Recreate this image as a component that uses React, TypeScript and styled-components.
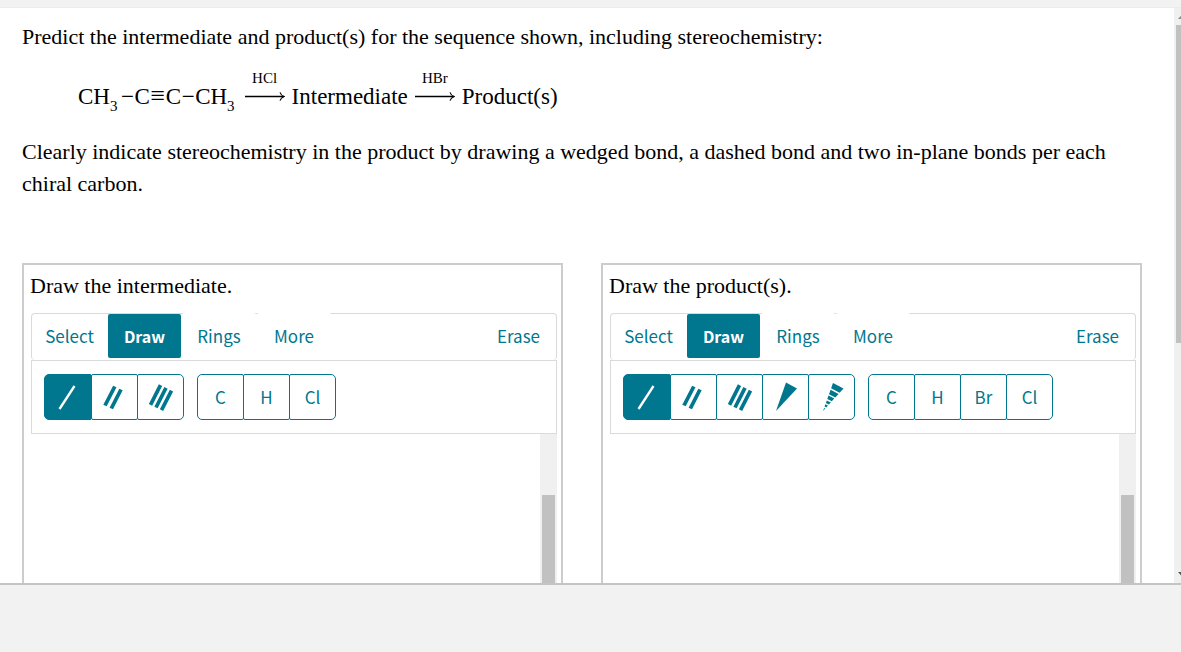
import React from "react";
import styled, { createGlobalStyle } from "styled-components";

const TEAL = "#00778f";
const LINE = "#dadada";

const GlobalStyle = createGlobalStyle`
  *, *::before, *::after { box-sizing: border-box; }
  body {
    margin: 0;
    background: #f2f2f2;
    color: #000;
    font-family: "Liberation Serif", "Times New Roman", serif;
    font-size: 22px;
    line-height: 32px;
  }
`;

const Page = styled.div`
  display: flex;
  flex-direction: column;
  height: 100vh;
  padding: 7px 0 67px;
`;

const Frame = styled.div`
  display: flex;
  flex: 1;
  min-height: 0;
  border-top: 1px solid #ebebeb;
  border-bottom: 2px solid #c4c4c4;
`;

const Question = styled.main`
  flex: 1;
  min-width: 0;
  overflow: hidden;
  background: #fff;
  padding: 13px 32px 0 22px;
`;

const Prompt = styled.p`
  margin: 0;
`;

const Reaction = styled.div`
  display: flex;
  align-items: flex-end;
  margin: 16px 0 23px;
  padding-left: 56px;
  height: 44px;
  font-size: 23px;
`;

const Sub = styled.sub`
  font-size: 15px;
  line-height: 0;
  vertical-align: -7px;
  margin-right: 3px;
`;

const Link = styled.span<{ $triple?: boolean }>`
  display: inline-block;
  width: ${(p) => (p.$triple ? 16 : 14)}px;
  font-size: ${(p) => (p.$triple ? 26 : 23)}px;
  line-height: 24px;
  text-align: center;
`;

const Step = styled.span`
  display: flex;
  flex-direction: column;
  align-items: center;
  gap: 4px;
  width: 40px;
  margin: 0 7px;
  padding-bottom: 11px;
  font-size: 15px;
  line-height: 16px;
`;

const Panels = styled.div`
  display: grid;
  grid-template-columns: 1fr 1fr;
  gap: 38px;
  margin-top: 63px;
`;

const Panel = styled.section`
  border: 2px solid #ccc;
  padding: 5px 4px 8px 7px;
`;

const PanelTitle = styled.h2`
  margin: 0 0 11px -1px;
  font-size: 22px;
  font-weight: 400;
  line-height: 32px;
`;

const Tabs = styled.div`
  display: flex;
  gap: 1px;
  height: 47px;
  border: 1px solid ${LINE};
  border-bottom: 0;
  border-radius: 4px;
`;

const Tab = styled.button<{ $active?: boolean; $cover?: boolean; $wide?: boolean; $end?: boolean }>`
  width: ${(p) => (p.$wide ? 75 : p.$active ? 73 : 74)}px;
  height: ${(p) => (p.$cover ? 45 : 44)}px;
  margin-top: ${(p) => (p.$cover ? -1 : 0)}px;
  margin-left: ${(p) => (p.$end ? "auto" : 0)};
  padding: ${(p) => (p.$cover ? 1 : 0)}px 0 0;
  border: 0;
  border-radius: 2px;
  background: ${(p) => (p.$active ? TEAL : p.$cover ? "#fff" : "transparent")};
  color: ${(p) => (p.$active ? "#fff" : TEAL)};
  font-family: "Noto Sans CJK SC", sans-serif;
  font-size: ${(p) => (p.$active ? 16 : 17)}px;
  font-weight: ${(p) => (p.$active ? 700 : 400)};
  line-height: 24px;
  cursor: pointer;
`;

const Tools = styled.div`
  display: flex;
  gap: 13px;
  padding: 13px 12px;
  border: 1px solid ${LINE};
`;

const Group = styled.div`
  display: flex;
`;

const Tool = styled.button<{ $active?: boolean }>`
  display: flex;
  align-items: center;
  justify-content: center;
  width: ${(p) => (p.$active ? 48 : 47)}px;
  height: 46px;
  padding: 0;
  border: 1px solid ${TEAL};
  border-radius: 2px;
  background: ${(p) => (p.$active ? TEAL : "#fff")};
  color: ${(p) => (p.$active ? "#fff" : TEAL)};
  font-family: "Noto Sans CJK SC", sans-serif;
  font-size: 17px;
  line-height: 24px;
  cursor: pointer;

  & + & { margin-left: -1px; }
  &:first-child { border-top-left-radius: 5px; border-bottom-left-radius: 5px; }
  &:last-child { border-top-right-radius: 5px; border-bottom-right-radius: 5px; }
`;

const Canvas = styled.div`
  display: flex;
  justify-content: flex-end;
  height: 320px;
`;

const CanvasTrack = styled.div`
  width: 17px;
  padding: 61px 2px 0;
  background: #f0f0f0;
`;

const CanvasThumb = styled.div`
  height: 180px;
  background: #c1c1c1;
`;

const PageTrack = styled.div`
  display: flex;
  flex-direction: column;
  align-items: flex-start;
  width: 7px;
  overflow: hidden;
  background: #f0f0f0;
`;

const PageThumb = styled.div`
  width: 13px;
  height: 318px;
  margin: 0 2px auto;
  background: #c1c1c1;
`;

const Arrow = () => (
  <svg width="40" height="12" viewBox="0 0 40 12" fill="none" stroke="#000" aria-hidden="true">
    <path d="M0 6.5H38.5" strokeWidth="1.4" />
    <path d="M35 2.3C35.7 4.5 37 5.8 39.3 6.5C37 7.2 35.7 8.5 35 10.7" strokeWidth="1.1" />
  </svg>
);

type Bond = "single" | "double" | "triple" | "wedge" | "hash";

const bondNames: Record<Bond, string> = {
  single: "Single bond",
  double: "Double bond",
  triple: "Triple bond",
  wedge: "Wedged bond",
  hash: "Dashed bond",
};

const BondIcon = ({ kind }: { kind: Bond }) => (
  <svg width="30" height="30" viewBox="0 0 30 30" fill="none" stroke="currentColor" aria-hidden="true">
    {kind === "single" && <path d="M6.5 27L21.5 4" strokeWidth="2.3" />}
    {kind === "double" && <path d="M5 23.5L14.8 4.5M11.3 26.5L21 7.5" strokeWidth="3.8" />}
    {kind === "triple" && <path d="M4.5 22.8L14.5 3.2M10 25.5L20 5.9M15.5 28.2L25.5 8.6" strokeWidth="3.7" />}
    {kind === "wedge" && <path d="M5 29L15 0.5L26 6.5Z" fill="currentColor" stroke="none" />}
    {kind === "hash" && (
      <g fill="currentColor" stroke="none">
        <path d="M16 1L26.5 6.5L22.6 10.8L14.1 6.3Z" />
        <path d="M13.6 7.7L21.6 11.9L18.3 15.5L12 12.2Z" />
        <path d="M11.5 13.6L17.3 16.6L14.8 19.3L10.3 17Z" />
        <path d="M9.8 18.4L13.8 20.5L11.9 22.5L8.9 20.9Z" />
        <path d="M8.4 22.3L10.9 23.6L9.3 25.4L7.6 24.5Z" />
        <path d="M7.1 25.9L8.3 26.5L6 29Z" />
      </g>
    )}
  </svg>
);

const Editor = ({ title, bonds, atoms }: { title: string; bonds: Bond[]; atoms: string[] }) => (
  <Panel>
    <PanelTitle>{title}</PanelTitle>
    <Tabs>
      <Tab type="button" $wide>Select</Tab>
      <Tab type="button" $active>Draw</Tab>
      <Tab type="button" $cover>Rings</Tab>
      <Tab type="button" $cover>More</Tab>
      <Tab type="button" $wide $end>Erase</Tab>
    </Tabs>
    <Tools>
      <Group>
        {bonds.map((b) => (
          <Tool key={b} type="button" $active={b === "single"} aria-label={bondNames[b]}>
            <BondIcon kind={b} />
          </Tool>
        ))}
      </Group>
      <Group>
        {atoms.map((a) => (
          <Tool key={a} type="button">{a}</Tool>
        ))}
      </Group>
    </Tools>
    <Canvas>
      <CanvasTrack>
        <CanvasThumb />
      </CanvasTrack>
    </Canvas>
  </Panel>
);

export default function App() {
  return (
    <Page>
      <GlobalStyle />
      <Frame>
        <Question>
          <Prompt>
            Predict the intermediate and product(s) for the sequence shown, including stereochemistry:
          </Prompt>
          <Reaction>
            <span>
              CH<Sub>3</Sub><Link>−</Link>C<Link $triple>≡</Link>C<Link>−</Link>CH<Sub>3</Sub>
            </span>
            <Step>
              HCl
              <Arrow />
            </Step>
            <span>Intermediate</span>
            <Step>
              HBr
              <Arrow />
            </Step>
            <span>Product(s)</span>
          </Reaction>
          <Prompt>
            Clearly indicate stereochemistry in the product by drawing a wedged bond, a dashed bond and two
            in-plane bonds per each chiral carbon.
          </Prompt>
          <Panels>
            <Editor title="Draw the intermediate." bonds={["single", "double", "triple"]} atoms={["C", "H", "Cl"]} />
            <Editor
              title="Draw the product(s)."
              bonds={["single", "double", "triple", "wedge", "hash"]}
              atoms={["C", "H", "Br", "Cl"]}
            />
          </Panels>
        </Question>
        <PageTrack>
          <svg width="17" height="17" viewBox="0 0 17 17" fill="#8b8b8b" aria-hidden="true">
            <path d="M8.5 6L13 11H4Z" />
          </svg>
          <PageThumb />
          <svg width="17" height="17" viewBox="0 0 17 17" fill="#505050" aria-hidden="true">
            <path d="M8.5 11L13 6H4Z" />
          </svg>
        </PageTrack>
      </Frame>
    </Page>
  );
}
